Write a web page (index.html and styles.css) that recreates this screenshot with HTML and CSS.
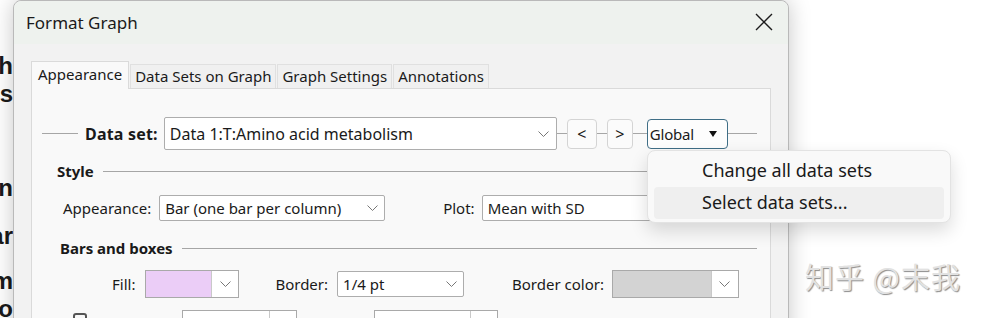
FILE: index.html
```html
<!DOCTYPE html>
<html lang="en">
<head>
    <meta charset="UTF-8">
    <title>Format Graph</title>
    <link rel="stylesheet" href="styles.css">
</head>
<body>

<div class="screen">
    <!-- window behind the dialog, only its right edge shows -->
    <div class="behind">
        <div class="frag l1">Graph</div>
        <div class="frag l2">Axis</div>
        <div class="frag l3">Mean</div>
        <div class="frag l4">Bar</div>
        <div class="frag l5">Sum</div>
        <div class="frag l6">Mo</div>
    </div>

    <div class="dialog">
        <div class="titlebar">
            <span class="title">Format Graph</span>
            <svg class="close" width="18" height="18" viewBox="0 0 18 18">
                <path d="M1 1 L17 17 M17 1 L1 17" stroke="#1c1c1c" stroke-width="1.4" fill="none"/>
            </svg>
        </div>

        <div class="body">
            <div class="tabs">
                <div class="tab active">Appearance</div>
                <div class="tab">Data Sets on Graph</div>
                <div class="tab">Graph Settings</div>
                <div class="tab">Annotations</div>
            </div>

            <div class="panel">
                <div class="row dataset">
                    <span class="rule short"></span>
                    <span class="label bold big-label">Data set:</span>
                    <div class="select big">
                        <span>Data 1:T:Amino acid metabolism</span>
                        <svg class="chev" width="11" height="6" viewBox="0 0 11 6"><path d="M0.5 0.5 L5.5 5.5 L10.5 0.5" stroke="#777" fill="none"/></svg>
                    </div>
                    <span class="rule tiny"></span>
                    <div class="navbtn">&lt;</div>
                    <span class="rule tiny"></span>
                    <div class="navbtn">&gt;</div>
                    <span class="rule tiny2"></span>
                    <div class="globalbtn">
                        <span>Global</span>
                        <svg width="8" height="6" viewBox="0 0 8 6"><path d="M0 0 L8 0 L4 6 Z" fill="#111"/></svg>
                    </div>
                    <span class="rule tail"></span>
                </div>

                <div class="section style">
                    <span class="bold">Style</span>
                    <span class="rule grow"></span>
                </div>

                <div class="row">
                    <span class="label l-appearance">Appearance:</span>
                    <div class="select w-bar">
                        <span>Bar (one bar per column)</span>
                        <svg class="chev" width="11" height="6" viewBox="0 0 11 6"><path d="M0.5 0.5 L5.5 5.5 L10.5 0.5" stroke="#777" fill="none"/></svg>
                    </div>
                    <span class="label l-plot">Plot:</span>
                    <div class="select w-plot">
                        <span>Mean with SD</span>
                    </div>
                </div>

                <div class="section bars">
                    <span class="bold">Bars and boxes</span>
                    <span class="rule grow"></span>
                </div>

                <div class="row fillrow">
                    <span class="label l-fill">Fill:</span>
                    <div class="colorbox w-fill">
                        <span class="swatch purple"></span>
                        <span class="drop"><svg width="11" height="6" viewBox="0 0 11 6"><path d="M0.5 0.5 L5.5 5.5 L10.5 0.5" stroke="#777" fill="none"/></svg></span>
                    </div>
                    <span class="label l-border">Border:</span>
                    <div class="select w-border">
                        <span>1/4 pt</span>
                        <svg class="chev" width="11" height="6" viewBox="0 0 11 6"><path d="M0.5 0.5 L5.5 5.5 L10.5 0.5" stroke="#777" fill="none"/></svg>
                    </div>
                    <span class="label l-bcolor">Border color:</span>
                    <div class="colorbox w-bcolor">
                        <span class="swatch grey"></span>
                        <span class="drop"><svg width="11" height="6" viewBox="0 0 11 6"><path d="M0.5 0.5 L5.5 5.5 L10.5 0.5" stroke="#777" fill="none"/></svg></span>
                    </div>
                </div>

                <div class="row lastrow">
                    <span class="checkbox"></span>
                    <div class="colorbox w-a"><span class="swatch white"></span><span class="drop"></span></div>
                    <div class="colorbox w-b"><span class="swatch white"></span><span class="drop"></span></div>
                </div>
            </div>
        </div>
    </div>

    <div class="menu">
        <div class="item">Change all data sets</div>
        <div class="item hover">Select data sets...</div>
    </div>

    <div class="watermark">知乎 @末我</div>
</div>

</body>
</html>
```

FILE: styles.css
```css
body {
    margin: 0;
    background-color: #ffffff;
    font-family: "Noto Sans", "Open Sans", sans-serif;
    color: #1a1a1a;
}
.screen {
    position: relative;
    display: flex;
    width: 987px;
    height: 318px;
    overflow: hidden;
    background-color: #ffffff;
}

/* window behind */
.behind {
    width: 13px;
    flex-shrink: 0;
    overflow: hidden;
    padding-top: 52px;
    background-color: #ffffff;
    font-family: "Liberation Sans", Arial, sans-serif;
    font-weight: bold;
    font-size: 24px;
    line-height: 28px;
}
.frag {
    display: flex;
    justify-content: flex-end;
    white-space: nowrap;
}
.l3 { margin-top: 66px; }
.l4 { margin-top: 20px; }
.l5 { margin-top: 17px; }
.l6 { margin-top: 0; }

/* dialog */
.dialog {
    width: 774px;
    height: 360px;
    flex-shrink: 0;
    background-color: #f2f2f2;
    border: 1px solid #b9b9b9;
    border-radius: 8px 8px 0 0;
    box-shadow: 0 0 22px rgba(0,0,0,0.22);
    z-index: 1;
}
.titlebar {
    height: 43px;
    display: flex;
    align-items: center;
    justify-content: space-between;
    padding: 0 15px 0 12px;
    background-color: #eef2ee;
    border-radius: 8px 8px 0 0;
}
.title {
    font-size: 17px;
    color: #1a1a1a;
}
.close {
    margin-bottom: 2px;
}
.body {
    padding: 18px 17px 0 17px;
}

.tabs {
    display: flex;
    align-items: flex-end;
    height: 26px;
    font-size: 15px;
}
.tab {
    height: 23px;
    line-height: 23px;
    padding: 0 4px;
    background-color: #f0f0f0;
    border: 1px solid #e0e0e0;
    border-bottom: none;
    margin-right: 1px;
    white-space: nowrap;
}
.tab.active {
    line-height: 24px;
    padding: 0 6px;
    background-color: #f9f9f9;
    border-color: #dadada;
    position: relative;
    z-index: 2;
    margin-bottom: -1px;
    height: 27px;
}

.panel {
    height: 240px;
    background-color: #f9f9f9;
    border: 1px solid #dadada;
    padding: 0 12px 0 10px;
    font-size: 15px;
}

.row {
    display: flex;
    align-items: center;
}
.bold {
    font-weight: bold;
    font-size: 15px;
}
.bold.big-label {
    font-size: 16px;
    letter-spacing: 0.2px;
}
.rule {
    height: 1px;
    background-color: #a6a6a6;
}
.rule.short { width: 36px; margin-right: 7px; }
.rule.tiny { width: 10px; }
.rule.tiny2 { width: 14px; }
.rule.tail { width: 29px; }
.rule.grow { flex: 1; margin-left: 9px; }

.dataset {
    margin-top: 28px;
    height: 33px;
}
.dataset .label {
    margin-right: 6px;
}
.select {
    display: flex;
    align-items: center;
    justify-content: space-between;
    height: 26px;
    box-sizing: border-box;
    padding: 0 6px 0 5px;
    background-color: #ffffff;
    border: 1px solid #adadad;
    border-radius: 2px;
    white-space: nowrap;
    overflow: hidden;
}
.select.big {
    width: 393px;
    height: 33px;
    font-size: 16px;
    padding-left: 5px;
    padding-right: 7px;
}
.navbtn {
    width: 30px;
    height: 30px;
    box-sizing: border-box;
    border: 1px solid #d4d4d4;
    border-radius: 4px;
    background-color: #fbfbfb;
    display: flex;
    align-items: center;
    justify-content: center;
    font-size: 16px;
}
.navbtn + .rule.tiny + .navbtn { width: 26px; }
.globalbtn {
    width: 81px;
    height: 30px;
    box-sizing: border-box;
    border: 1px solid #3f6e86;
    border-radius: 4px;
    background-color: #fdfdfd;
    display: flex;
    align-items: center;
    justify-content: space-between;
    padding: 0 10px 0 2px;
    font-size: 15px;
    letter-spacing: -0.2px;
}

.section {
    display: flex;
    align-items: center;
    height: 24px;
}
.section.style {
    margin-top: 9px;
    padding-left: 15px;
}
.section.bars {
    margin-top: 15px;
    padding-left: 18px;
    margin-right: 1px;
}

.row .label { white-space: nowrap; }
.l-appearance { margin-left: 21px; margin-right: 8px; }
.l-plot { margin-left: 58px; margin-right: 7px; }
.w-bar { width: 226px; }
.w-plot { width: 240px; }
.section.style + .row { margin-top: 12px; height: 26px; }

.fillrow {
    margin-top: 10px;
    height: 28px;
}
.l-fill { margin-left: 70px; margin-right: 10px; }
.l-border { margin-left: 36px; margin-right: 9px; }
.l-bcolor { margin-left: 48px; margin-right: 8px; }
.w-border { width: 127px; }

.colorbox {
    display: flex;
    height: 28px;
    box-sizing: border-box;
    border: 1px solid #a9a9a9;
    background-color: #ffffff;
}
.colorbox .swatch {
    flex: 1;
    border-right: 1px solid #c9c9c9;
}
.colorbox .drop {
    width: 26px;
    display: flex;
    align-items: center;
    justify-content: center;
}
.swatch.purple { background-color: #ebcdf7; }
.swatch.grey { background-color: #d3d3d3; }
.swatch.white { background-color: #ffffff; }
.w-fill { width: 94px; }
.w-bcolor { width: 127px; }

.lastrow {
    margin-top: 12px;
    align-items: flex-start;
}
.checkbox {
    width: 14px;
    height: 14px;
    margin-left: 31px;
    margin-top: 3px;
    border: 2px solid #555;
    border-radius: 3px;
    box-sizing: border-box;
}
.w-a { width: 115px; margin-left: 95px; }
.w-b { width: 124px; margin-left: 77px; }

/* popup menu, over the dialog */
.menu {
    position: absolute;
    left: 647px;
    top: 150px;
    width: 304px;
    height: 73px;
    box-sizing: border-box;
    padding: 4px 6px;
    background-color: #f9f9f9;
    border: 1px solid #e3e3e3;
    border-radius: 8px;
    box-shadow: 0 8px 18px rgba(0,0,0,0.14);
    z-index: 5;
    font-size: 18px;
}
.item {
    height: 32px;
    line-height: 30px;
    padding-left: 48px;
    border-radius: 4px;
}
.item.hover {
    background-color: #efefef;
}

.watermark {
    position: absolute;
    left: 805px;
    top: 255px;
    font-family: "Noto Sans CJK SC", sans-serif;
    font-size: 29px;
    color: #e2e2e2;
    text-shadow: 1px 1px 1px #8c8c8c;
    letter-spacing: 1px;
    z-index: 6;
}
```
